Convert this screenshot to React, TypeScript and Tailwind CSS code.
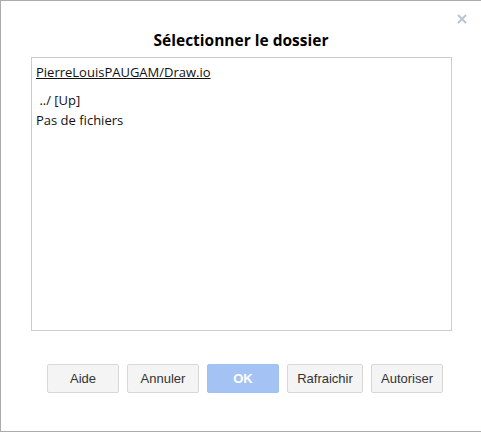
import React from 'react';

const buttons = [
  { label: 'Aide', primary: false, w: 'w-[72px]' },
  { label: 'Annuler', primary: false, w: 'w-[72px]' },
  { label: 'OK', primary: true, w: 'w-[72px]' },
  { label: 'Rafraichir', primary: false, w: 'w-[76px]' },
  { label: 'Autoriser', primary: false, w: 'w-[72px]' },
];

export default function App() {
  return (
    <div className="relative w-[481px] h-[432px] bg-white border-t border-l border-b border-[#ababab] flex flex-col font-['Open_Sans','Noto_Sans',sans-serif]">
      <button className="absolute top-[12px] right-[13px] w-[12px] h-[12px] flex items-center justify-center" aria-label="close">
        <svg width="10" height="10" viewBox="0 0 10 10">
          <path d="M1 1 L9 9 M9 1 L1 9" stroke="#b9c4d4" strokeWidth="2" />
        </svg>
      </button>

      <h1 className="mt-[28px] text-center text-[15.5px] leading-[22px] font-bold text-black">Sélectionner le dossier</h1>

      <div className="mt-[6px] ml-[30px] w-[421px] h-[274px] border border-[#cccccc] px-[4px] pt-[4px] text-[13px] text-[#111]">
        <a href="#" className="underline leading-[20px] block">PierreLouisPAUGAM/Draw.io</a>
        <div className="mt-[8px] leading-[20px]">&nbsp;../ [Up]</div>
        <div className="leading-[20px]">Pas de fichiers</div>
      </div>

      <div className="mt-[33px] ml-[46px] flex gap-[8px] font-['Liberation_Sans',Arial,sans-serif]">
        {buttons.map((b) => (
          <button
            key={b.label}
            className={
              b.primary
                ? `${b.w} h-[29px] rounded-[2px] border border-[#a1c0f3] bg-[#a4c2f4] text-white text-[13px] font-bold`
                : `${b.w} h-[29px] rounded-[2px] border border-[#d8d8d8] bg-[#f4f4f4] text-[#333] text-[13px]`
            }
          >
            {b.label}
          </button>
        ))}
      </div>
    </div>
  );
}
